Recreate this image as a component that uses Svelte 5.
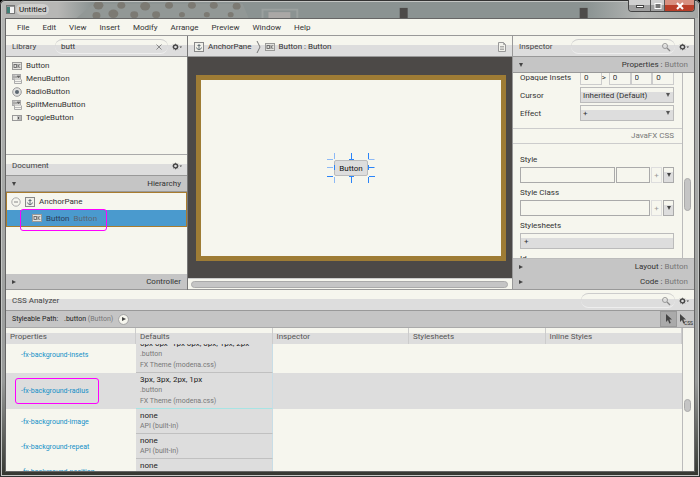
<script>
  const menus = ['File', 'Edit', 'View', 'Insert', 'Modify', 'Arrange', 'Preview', 'Window', 'Help']

  const library = [
    { name: 'Button', icon: 'ok' },
    { name: 'MenuButton', icon: 'menu' },
    { name: 'RadioButton', icon: 'radio' },
    { name: 'SplitMenuButton', icon: 'menu' },
    { name: 'ToggleButton', icon: 'toggle' },
  ]

  const columns = ['Properties', 'Defaults', 'Inspector', 'Stylesheets', 'Inline Styles']

  const rows = [
    { name: '-fx-background-insets', value: '0px 0px -1px 0px, 0px, 1px, 2px', lines: ['.button', 'FX Theme (modena.css)'] },
    { name: '-fx-background-radius', value: '3px, 3px, 2px, 1px', lines: ['.button', 'FX Theme (modena.css)'] },
    { name: '-fx-background-image', value: 'none', lines: ['API (built-in)'] },
    { name: '-fx-background-repeat', value: 'none', lines: ['API (built-in)'] },
    { name: '-fx-background-position', value: 'none', lines: ['API (built-in)'] },
  ]

  let search = $state('butt')
  let inspectorSearch = $state('')
  let analyzerSearch = $state('')
  let selected = $state('-fx-background-radius')
  let insets = $state(['0', '0', '0', '0'])

  let items = $derived(library.filter(i => i.name.toLowerCase().includes(search.toLowerCase())))

  // starting scroll offset for a pane
  function scrollFrom(node, top) {
    node.scrollTop = top
  }
</script>

{#snippet icon(name)}
  <svg class="icon" viewBox="0 0 10 10" aria-hidden="true">
    {#if name === 'ok'}
      <rect x="0.5" y="1.5" width="9" height="7" fill="#e4e4e0" stroke="#9a9a98" />
      <rect x="2" y="3.5" width="2.4" height="3" fill="none" stroke="#666" stroke-width="0.9" />
      <path d="M6 3v4M8.3 3L6.3 5L8.3 7" fill="none" stroke="#666" stroke-width="0.9" />
    {:else if name === 'menu'}
      <rect x="0.5" y="0.5" width="8" height="5" fill="#d4d4d2" stroke="#aaa" />
      <path d="M2 1.5v3M4 2v2M5 2h3L6.5 4z" stroke="#666" fill="#666" stroke-width="0.7" />
      <path d="M2.5 5.5v4h7v-4" fill="#f4f4ee" stroke="#aaa" />
      <path d="M3 7.5h6" stroke="#bbb" />
    {:else if name === 'radio'}
      <circle cx="5" cy="5" r="4.3" fill="#e2e2e0" stroke="#999" />
      <circle cx="5" cy="5" r="2" fill="#5b6670" />
    {:else if name === 'toggle'}
      <rect x="0.5" y="2.5" width="9" height="5" fill="#f0f0ea" stroke="#999" />
      <rect x="5" y="3" width="4" height="4" fill="#bbb" />
      <path d="M6.5 4v2" stroke="#555" />
    {:else if name === 'anchor'}
      <rect x="0.5" y="0.5" width="9" height="9" fill="#f0f0ea" stroke="#888" />
      <path d="M5 2v6M3.5 3.5h3M2.5 5.5Q3 7.5 5 7.8Q7 7.5 7.5 5.5" fill="none" stroke="#68747a" />
    {:else if name === 'gear'}
      <circle cx="3.5" cy="5" r="2" fill="none" stroke="#444" stroke-width="1.3" />
      <path d="M3.5 1.7v1.2M3.5 7.1v1.2M0.3 5h1M5.7 5h1M1.2 2.7l.8.8M5 6.5l.8.8M1.2 7.3l.8-.8M5 3.5l.8-.8" stroke="#444" stroke-width="0.7" />
      <path d="M7.5 4.5h2.5l-1.2 1.5z" fill="#444" />
    {:else if name === 'lens'}
      <circle cx="4" cy="4" r="2.5" fill="none" stroke="#999" />
      <path d="M6 6l3 3" stroke="#888" stroke-width="1.2" />
    {:else if name === 'doc'}
      <path d="M1.5 0.5h5l2 2v7h-7z" fill="#f2f2ec" stroke="#999" />
      <path d="M6.5 0.5v2h2M3 4.5h4M3 6h4M3 7.5h4" fill="none" stroke="#999" stroke-width="0.8" />
    {:else if name === 'pick' || name === 'pickcss'}
      <path d="M2 0v8l2-2 1.3 3.5 1.5-.6L5.4 5.5H8z" fill="#444" />
    {/if}
  </svg>
{/snippet}

{#snippet header(title)}
  <h2>{title}</h2>
{/snippet}

{#snippet gear(label)}
  <button class="gear" aria-label={label}>{@render icon('gear')}</button>
{/snippet}

<div class="window">
  <header class="titlebar">
    <svg class="wallpaper" viewBox="0 0 700 19" preserveAspectRatio="none" aria-hidden="true">
      <defs>
        <linearGradient id="glass">
          <stop offset="0" stop-color="#b7b7b5" />
          <stop offset="0.08" stop-color="#b7b7b5" />
          <stop offset="0.13" stop-color="#8b9392" />
          <stop offset="0.84" stop-color="#8b9392" />
          <stop offset="0.92" stop-color="#b4b6b4" />
          <stop offset="1" stop-color="#a4a6a4" />
        </linearGradient>
      </defs>
      <rect width="700" height="19" fill="url(#glass)" />
      <path d="M75 19L92 2h150l6 17z" fill="#929896" />
      <g fill="#7c7a73">
        <circle cx="97" cy="4" r="5" /><circle cx="120" cy="4" r="4" />
        <circle cx="144" cy="5" r="5" /><circle cx="168" cy="4" r="4" />
        <circle cx="191" cy="4" r="4" /><circle cx="213" cy="4" r="4" />
        <circle cx="236" cy="5" r="4" /><circle cx="95" cy="16" r="4" />
        <circle cx="112" cy="14" r="5" /><circle cx="133" cy="15" r="4" />
        <circle cx="155" cy="15" r="4" /><circle cx="181" cy="15" r="3" />
        <circle cx="206" cy="15" r="3" /><circle cx="230" cy="15" r="3" />
      </g>
      <path d="M262 19V9h35v10" fill="none" stroke="#9ba19f" stroke-width="2" />
      <rect x="268" y="12" width="22" height="7" fill="#aaa8a6" />
      <rect x="400" y="7" width="8" height="12" fill="#4d4b49" />
      <rect x="581" y="7" width="8" height="12" fill="#4d4b49" />
    </svg>
    <svg class="app-icon" viewBox="0 0 9 9" aria-hidden="true">
      <rect x="0.5" y="0.5" width="8" height="8" fill="#f4f4f4" stroke="#777" />
      <rect x="1" y="2" width="3" height="6" fill="#3f8077" />
      <path d="M1 1.5h7" stroke="#999" />
    </svg>
    <h1>Untitled</h1>
    <div class="controls">
      <button aria-label="Minimize"><svg viewBox="0 0 10 8"><rect x="1.5" y="3.5" width="7" height="2" fill="#fff" stroke="#444" /></svg></button>
      <button class="max" aria-label="Maximize"><svg viewBox="0 0 10 8"><rect x="2" y="1.5" width="6" height="5" fill="#777" stroke="#fff" /></svg></button>
      <button class="close" aria-label="Close"><svg viewBox="0 0 10 8"><path d="M2 1l6 6M8 1l-6 6" stroke="#fff" stroke-width="2" /></svg></button>
    </div>
  </header>

  <div class="client">
    <nav class="menubar">
      {#each menus as menu}
        <button>{menu}</button>
      {/each}
    </nav>

    <div class="workspace">
      <!-- Library and document tree -->
      <aside class="left">
        <div class="head">
          {@render header('Library')}
          <div class="search">
            <input bind:value={search} aria-label="Search library" />
            <button aria-label="Clear search" onclick={() => search = ''}>
              <svg class="icon" viewBox="0 0 10 10"><path d="M2.5 2.5l5 5M7.5 2.5l-5 5" stroke="#888" /></svg>
            </button>
          </div>
          {@render gear('Library options')}
        </div>
        <ul class="library">
          {#each items as item (item.name)}
            <li>{@render icon(item.icon)}<span>{item.name}</span></li>
          {/each}
        </ul>

        <div class="head document">
          {@render header('Document')}
          {@render gear('Document options')}
        </div>
        <button class="fold"><i class="tri down"></i><span>Hierarchy</span></button>
        <div class="tree">
          <div class="node">
            <svg class="icon" viewBox="0 0 10 10" aria-hidden="true">
              <circle cx="5" cy="5" r="4.2" fill="none" stroke="#aaa" />
              <path d="M3 5h4" stroke="#888" />
            </svg>
            {@render icon('anchor')}
            <span>AnchorPane</span>
          </div>
          <div class="node child">
            {@render icon('ok')}
            <span>Button</span>
            <span class="info">Button</span>
            <i class="mark"></i>
          </div>
        </div>
        <div class="blank"></div>
        <button class="fold last"><i class="tri right"></i><span>Controller</span></button>
      </aside>

      <!-- Content editor -->
      <main class="center">
        <div class="head path">
          {@render icon('anchor')}
          <span>AnchorPane</span>
          <svg class="chevron" viewBox="0 0 5 14" aria-hidden="true"><path d="M1 1l3 6-3 6" fill="none" stroke="#777" /></svg>
          {@render icon('ok')}
          <span>Button : Button</span>
          <button class="doc" aria-label="Document information">{@render icon('doc')}</button>
        </div>
        <div class="canvas">
          <div class="pane">
            <div class="target">
              <button>Button</button>
              <svg viewBox="0 0 48 30" aria-hidden="true">
                <g fill="none" stroke="#8db9f5">
                  <path d="M0 6.5h6M7.5 0v6M0 14.5h6M7.5 24v6M41.5 6.5h6" />
                </g>
                <g fill="none" stroke="#2a84f8">
                  <path d="M24.5 0v6M22 6.5h5M41.5 0v6M41.5 14.5h6M41.5 12v5M7.5 12v5M0 23.5h6M42 23.5h6M41.5 24v6M24.5 24v6M22 23.5h5" />
                </g>
              </svg>
            </div>
          </div>
        </div>
        <div class="hscroll"><i></i></div>
      </main>

      <!-- Inspector -->
      <aside class="right">
        <div class="head">
          {@render header('Inspector')}
          <div class="search">
            <input bind:value={inspectorSearch} aria-label="Search properties" />
            {@render icon('lens')}
          </div>
          {@render gear('Inspector options')}
        </div>
        <button class="fold"><i class="tri down"></i><span>Properties : <em>Button</em></span></button>
        <div class="props">
          <div class="scroller" use:scrollFrom={4}>
            <div class="form">
              <span>Opaque Insets</span>
              <div class="insets">
                <input bind:value={insets[0]} aria-label="Top inset" />
                <i>&gt;</i>
                <input bind:value={insets[1]} aria-label="Right inset" />
                <input bind:value={insets[2]} aria-label="Bottom inset" />
                <input bind:value={insets[3]} aria-label="Left inset" />
              </div>
              <label for="cursor">Cursor</label>
              <div class="pick"><select id="cursor"><option>Inherited (Default)</option></select></div>
              <label for="effect">Effect</label>
              <div class="pick"><select id="effect"><option>+</option></select></div>
            </div>
            <h3>JavaFX CSS</h3>
            <div class="css">
              <label for="style">Style</label>
              <div class="line">
                <input id="style" />
                <input class="short" aria-label="Style value" />
                <button class="plus">+</button>
                <button class="drop" aria-label="Style menu"><i class="tri down"></i></button>
              </div>
              <label for="class">Style Class</label>
              <div class="line">
                <input id="class" />
                <button class="plus">+</button>
                <button class="drop" aria-label="Style class menu"><i class="tri down"></i></button>
              </div>
              <label for="sheets">Stylesheets</label>
              <div class="line"><button id="sheets" class="add">+</button></div>
              <label for="id">Id</label>
              <div class="line"><input id="id" /></div>
            </div>
          </div>
          <div class="vscroll"><i></i></div>
        </div>
        <button class="fold flat"><i class="tri right"></i><span>Layout : <em>Button</em></span></button>
        <button class="fold last"><i class="tri right"></i><span>Code : <em>Button</em></span></button>
      </aside>
    </div>

    <!-- CSS Analyzer -->
    <section class="analyzer">
      <div class="head">
        {@render header('CSS Analyzer')}
        <div class="search">
          <input bind:value={analyzerSearch} aria-label="Search CSS" />
          {@render icon('lens')}
        </div>
        {@render gear('Analyzer options')}
      </div>
      <div class="stylebar">
        <span>Styleable Path:</span>
        <span class="crumb">.button <em>(Button)</em></span>
        <button class="play" aria-label="Next path"><i class="tri right"></i></button>
        <button class="tool active" aria-label="Pick mode">{@render icon('pick')}</button>
        <button class="tool" aria-label="CSS pick mode">{@render icon('pickcss')}<small>CSS</small></button>
      </div>
      <div class="tablewrap">
        <div class="scroller" use:scrollFrom={7}>
          <table>
            <thead>
              <tr>
                {#each columns as column}
                  <th>{column}</th>
                {/each}
              </tr>
            </thead>
            <tbody>
              {#each rows as row (row.name)}
                <tr class:selected={selected === row.name} onclick={() => selected = row.name}>
                  <td class="name">
                    <a href="#{row.name}">{row.name}</a>
                    {#if row.name === '-fx-background-radius'}<i class="mark"></i>{/if}
                  </td>
                  <td class="default">
                    <b>{row.value}</b>
                    {#each row.lines as line}
                      <small>{line}</small>
                    {/each}
                  </td>
                  <td></td>
                  <td></td>
                  <td></td>
                </tr>
              {/each}
            </tbody>
          </table>
        </div>
        <div class="vscroll table"><i></i></div>
      </div>
    </section>
  </div>
</div>

<style>
  :global(body) { margin: 0; background: #000; }
  * { box-sizing: border-box; }

  .window {
    height: 100vh;
    display: flex;
    flex-direction: column;
    padding: 0 5px 5px;
    border-radius: 5px 5px 0 0;
    background: linear-gradient(#b4b6b4, #999b9a 80%, #33352f);
    box-shadow: inset 0 0 0 1px #333, inset 0 0 0 2px #c4c6c4;
    font: 8px/11px Roboto, "Open Sans", sans-serif;
    color: #333;
    overflow: hidden;
    position: relative;
  }
  button, input, select { font: inherit; color: inherit; margin: 0; padding: 0; border: 0; background: none; border-radius: 0; }
  input { min-width: 0; outline: none; }
  i, em { font-style: normal; }
  em { color: #777; }
  h1, h2, h3 { margin: 0; font-size: 8px; font-weight: 400; }
  h2 { color: #444; }
  .icon { width: 10px; height: 10px; flex: none; display: block; }

  /* title bar */
  .titlebar { height: 18px; flex: none; display: flex; align-items: center; }
  .wallpaper { position: absolute; left: 2px; top: 2px; width: calc(100% - 4px); height: 16px; }
  .app-icon { width: 9px; height: 9px; position: relative; margin-left: 1px; }
  h1 { position: relative; margin-left: 1px; padding: 0 3px; border-radius: 6px; background: #cfcfcd; color: #111; }
  .controls { position: relative; display: flex; align-self: flex-start; margin-left: auto; border: 1px solid #444; border-top: 0; border-radius: 0 0 4px 4px; overflow: hidden; }
  .controls button { width: 22px; height: 11px; display: grid; place-items: center; background: linear-gradient(#d0d0d0 50%, #a0a0a0 50%); border-right: 1px solid #555; }
  .controls button.max { width: 14px; }
  .controls button.close { width: 29px; border: 0; background: linear-gradient(#d89080 45%, #b93e28 45%); }
  .controls svg { width: 10px; height: 8px; }

  .client { flex: 1; min-height: 0; display: flex; flex-direction: column; border: 1px solid #666; background: #f6f6ee; position: relative; }

  .menubar { height: 17px; flex: none; display: flex; align-items: center; gap: 13px; padding-left: 11px; border-bottom: 1px solid #999; }

  /* shared bars */
  .head {
    height: 21px;
    flex: none;
    display: flex;
    align-items: center;
    padding: 1px 5px 0 6px;
    background: linear-gradient(#f6f6ee 9px, #ddd 9px);
    border-bottom: 1px solid #999;
  }
  .gear { margin-left: auto; }
  .search {
    height: 15px;
    display: flex;
    align-items: center;
    padding: 0 4px 0 6px;
    margin-left: auto;
    border-radius: 8px;
    border-top: 1px solid #ccc;
    border-bottom: 1px solid #eee;
    background: linear-gradient(#f6f6ee 5px, #ddd 5px);
  }
  .search input { flex: 1; }
  .search + .gear { margin-left: 4px; }
  .fold {
    height: 16px;
    flex: none;
    display: flex;
    align-items: center;
    justify-content: space-between;
    padding: 0 6px;
    background: #c5c5c5;
    border-bottom: 1px solid #999;
  }
  .fold.flat { height: 15px; border-bottom: 0; }
  .tri { width: 0; height: 0; border: 2px solid transparent; }
  .tri.down { border-width: 4px 2px 0; border-top-color: #444; }
  .tri.right { border-width: 2px 0 2px 4px; border-left-color: #444; }

  .workspace { flex: 1; min-height: 0; display: grid; grid-template-columns: 181px 1fr 181px; }
  .left, .center, .right { display: flex; flex-direction: column; min-width: 0; min-height: 0; }
  .left .search { width: 113px; }

  /* library */
  .library { list-style: none; margin: 0; padding: 2px 0 0 6px; height: 97px; flex: none; }
  .library li { height: 13px; display: flex; align-items: center; gap: 4px; }
  .document { border-top: 1px solid #aaa; height: 22px; }

  /* document tree */
  .tree { border: 1px solid #a97c2e; }
  .node { height: 17px; display: flex; align-items: center; gap: 4px; padding-left: 4px; }
  .node.child { height: 16px; padding-left: 25px; background: #4a9ace; position: relative; color: #2c3c58; }
  .info { color: #5c6670; }
  .mark { position: absolute; border: 1px solid #f0f; border-radius: 3px; pointer-events: none; }
  .node .mark { left: 13px; top: -1px; width: 87px; height: 22px; z-index: 1; }
  .blank { flex: 1; }

  /* editor */
  .center { border-left: 1px solid #777; border-right: 1px solid #999; }
  .path { gap: 4px; }
  .chevron { width: 5px; height: 14px; }
  .doc { margin-left: auto; }
  .canvas { flex: 1; min-height: 0; display: flex; padding: 18px 6px 17px 8px; background: #4c4947; }
  .pane { flex: 1; display: grid; place-items: center; border: 5px solid #9e7c35; background: #f6f6ee; }
  .target { display: grid; place-items: center; }
  .target > * { grid-area: 1 / 1; }
  .target button { width: 34px; height: 16px; border: 1px solid #bbb; border-radius: 2px; background: #ddd; color: #111; }
  .target svg { width: 48px; height: 30px; }
  .hscroll { height: 12px; flex: none; padding: 2px 4px 1px 3px; border-bottom: 1px solid #999; border-top: 1px solid #ccc; }
  .hscroll i { display: block; height: 7px; border-radius: 4px; background: #c5c5c5; border: 1px solid #aaa; }

  /* inspector */
  .right .search { width: 104px; }
  .props, .tablewrap { flex: 1; min-height: 0; display: flex; border-bottom: 1px solid #bbb; }
  .scroller { flex: 1; overflow: hidden; }
  .form { display: grid; grid-template-columns: 60px 1fr; grid-auto-rows: 16px; gap: 2px 0; align-items: center; padding: 0 8px 7px 7px; }
  .insets { display: grid; grid-template-columns: 1fr 7px 1fr 1fr 1fr; height: 16px; align-items: center; }
  .insets input { width: 100%; height: 16px; border: 1px solid #ccc; padding-left: 3px; }
  .pick { position: relative; height: 16px; display: flex; }
  .pick select { flex: 1; appearance: none; padding-left: 2px; border: 1px solid #bbb; background: linear-gradient(#f6f6ee 4px, #ddd 4px); }
  .pick::after { content: ''; position: absolute; right: 4px; top: 6px; border: 2px solid transparent; border-top: 4px solid #555; border-bottom: 0; }
  h3 { height: 16px; line-height: 14px; text-align: right; padding-right: 8px; border: 1px solid #ccc; border-width: 1px 0; color: #777; }
  .css { padding: 11px 8px 0 7px; }
  .css label { display: block; height: 10px; line-height: 10px; margin-bottom: 2px; }
  .line { display: flex; height: 16px; margin-bottom: 5px; gap: 1px; }
  .line input { flex: 1; border: 1px solid #aaa; }
  .line .short { flex: 0 0 34px; }
  .line .plus { width: 11px; border: 1px solid #ddd; color: #999; }
  .line .drop { width: 11px; border: 1px solid #aaa; background: linear-gradient(#f6f6ee 4px, #ddd 4px); display: grid; place-items: center; }
  .line .add { flex: 1; text-align: left; padding-left: 3px; border: 1px solid #bbb; background: linear-gradient(#f6f6ee 4px, #ddd 4px); }
  .vscroll { width: 12px; flex: none; border-left: 1px solid #bbb; padding: 105px 2px 0 1px; }
  .vscroll i { display: block; width: 7px; height: 33px; border-radius: 4px; background: #c5c5c5; border: 1px solid #aaa; }

  /* analyzer */
  .analyzer { height: 181px; flex: none; display: flex; flex-direction: column; }
  .analyzer .search { width: 94px; }
  .stylebar { height: 17px; flex: none; display: flex; align-items: center; padding-left: 6px; background: #c5c5c5; border-bottom: 1px solid #aaa; color: #222; font-size: 7px; }
  .crumb { margin-left: 6px; }
  .play { width: 9px; height: 9px; margin-left: 6px; border-radius: 50%; background: #f6f6ee; display: grid; place-items: center; outline: 1px solid #aaa; }
  .tool { width: 17px; height: 16px; display: flex; align-items: center; justify-content: center; }
  .tool.active { margin-left: auto; background: #aaa; border: 1px solid #999; }
  .tool small { font-size: 5px; line-height: 7px; margin-left: -4px; align-self: flex-end; }
  .tablewrap { border-bottom: 0; }
  table { width: 100%; table-layout: fixed; border-collapse: separate; border-spacing: 0; }
  th { position: sticky; top: 0; z-index: 1; height: 16px; padding: 0 0 0 4px; text-align: left; font-weight: 400; color: #555; background: linear-gradient(#f6f6ee 5px, #ddd 5px); border-right: 1px solid #ccc; }
  th:first-child { width: 130px; }
  td { padding: 0; vertical-align: middle; }
  .name { padding-left: 15px; position: relative; }
  .name a { color: #1590c8; text-decoration: none; font-size: 7px; }
  .name .mark { left: 9px; top: 5px; width: 84px; height: 26px; }
  .default { padding: 1px 0 1px 4px; background: #ddd; border-bottom: 1px solid #c0c0c0; border-right: 1px solid #c8dde6; white-space: nowrap; }
  .default b, .default small { display: block; font-size: 8px; font-weight: 400; color: #222; }
  .default small { font-size: 7px; color: #777; }
  .selected td { background: #ddd; }
  .selected .default { border-bottom-color: #a8e4e4; }
  .vscroll.table { padding-top: 71px; }
  .vscroll.table i { height: 13px; }
</style>
